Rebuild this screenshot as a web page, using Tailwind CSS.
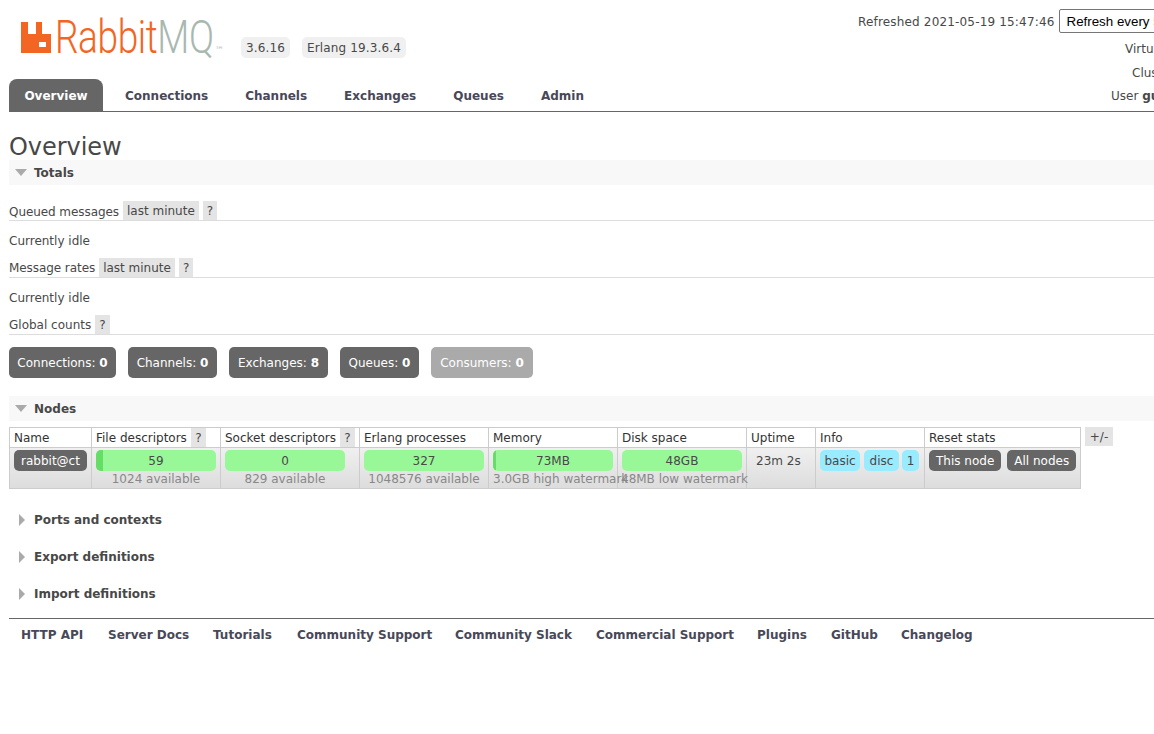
<!doctype html>
<html><head><meta charset="utf-8"><script src="https://cdn.jsdelivr.net/npm/@tailwindcss/browser@4"></script></head>
<body class="w-[1154px] h-[734px] overflow-hidden bg-white text-[#484848] text-[12px] leading-[15px] font-['DejaVu_Sans','Verdana',sans-serif]">
<header class="ml-[9px] w-[1300px] h-[112px] flex border-b border-[#666]">
  <div class="w-[849px] flex flex-col">
    <div class="h-[79px] flex items-start">
      <svg class="mt-[22px] ml-[12px] shrink-0" width="30" height="31" viewBox="0 0 30 31"><path fill="#f26522" fill-rule="evenodd" d="M0 0h7v12h8V0h6v12h9v19H0z M18 20v5h7v-5z"/></svg>
      <span class="mt-[12px] ml-[4px] w-[158px] shrink-0 origin-left scale-x-[0.805] text-[46px] leading-[50px] font-['Roboto',sans-serif] font-light tracking-[-0.5px] whitespace-nowrap"><span class="text-[#f26522]">Rabbit</span><span class="text-[#a8b8b0]">MQ</span></span>
      <span class="mt-[45px] w-[0px] ml-[2px] text-[9px] leading-[10px] text-[#b4bdb8]">™</span>
      <span class="mt-[37px] ml-[26px] bg-[#f0f0f0] rounded-[5px] px-[5px] pt-[4px] pb-[2px] whitespace-nowrap tracking-[0.14px]">3.6.16</span>
      <span class="mt-[37px] ml-[12px] bg-[#f0f0f0] rounded-[5px] px-[5px] pt-[4px] pb-[2px] whitespace-nowrap tracking-[0.14px]">Erlang 19.3.6.4</span>
    </div>
    <nav class="flex gap-[7px] font-bold text-[#484858] h-[32px] items-center">
      <a class="w-[94px] h-[32px] pt-[2px] flex items-center justify-center bg-[#666] text-white rounded-t-[8px]">Overview</a>
      <a class="px-[15px] pt-[2px]">Connections</a>
      <a class="px-[15px] pt-[2px]">Channels</a>
      <a class="px-[15px] pt-[2px]">Exchanges</a>
      <a class="px-[15px] pt-[2px]">Queues</a>
      <a class="px-[15px] pt-[2px]">Admin</a>
    </nav>
  </div>
  <div class="flex flex-col">
    <div class="flex items-center gap-[4px] h-[24px] mt-[9px] whitespace-nowrap">
      <span class="pt-[2px] tracking-[0.17px]">Refreshed 2021-05-19 15:47:46</span>
      <span class="border border-[#767676] rounded-[2px] h-[24px] px-[7px] flex items-center text-[13.33px] text-black font-['Liberation_Sans',sans-serif] w-[130px]">Refresh every 5 seconds</span>
    </div>
    <div class="mt-[9px] pl-[267px] whitespace-nowrap">Virtual host</div>
    <div class="mt-[9px] pl-[274px] whitespace-nowrap">Cluster rabbit@ct</div>
    <div class="mt-[8px] pl-[253px] whitespace-nowrap">User <b>guest</b></div>
  </div>
</header>
<main class="ml-[9px] w-[1200px]">
  <h1 class="text-[24px] leading-[28px] mt-[21px] h-[27px] tracking-[-0.05px]">Overview</h1>
  <h2 class="h-[25px] bg-[#f8f8f8] flex items-center font-bold text-[12px]">
    <svg class="ml-[6px] mr-[7px]" width="12" height="7" viewBox="0 0 12 7"><path d="M0 0h12L6 7z" fill="#aaa"/></svg><span class="pt-[2px]">Totals</span></h2>
  <div class="mt-[16px] h-[20px] border-b border-[#ddd] flex items-start">
    <span class="mt-[4px] tracking-[-0.07px]">Queued messages</span><span class="ml-[4px] bg-[#e4e4e4] px-[4px] h-[19px] leading-[21px]">last minute</span><span class="ml-[4px] bg-[#e4e4e4] px-[4px] h-[19px] leading-[21px]">?</span>
  </div>
  <p class="mt-[13px] h-[24px]">Currently idle</p>
  <div class="h-[20px] border-b border-[#ddd] flex items-start">
    <span class="mt-[3px] tracking-[-0.07px]">Message rates</span><span class="ml-[4px] bg-[#e4e4e4] px-[4px] h-[19px] leading-[21px]">last minute</span><span class="ml-[4px] bg-[#e4e4e4] px-[4px] h-[19px] leading-[21px]">?</span>
  </div>
  <p class="mt-[13px] h-[24px]">Currently idle</p>
  <div class="h-[20px] border-b border-[#ddd] flex items-start">
    <span class="mt-[3px]">Global counts</span><span class="ml-[4px] bg-[#e4e4e4] px-[4px] h-[19px] leading-[21px]">?</span>
  </div>
  <div class="mt-[12px] flex gap-[12px] text-white">
    <span class="h-[31px] w-[107px] pt-[2px] justify-center bg-[#666] rounded-[5px] flex items-center whitespace-pre">Connections: <b>0</b></span>
    <span class="h-[31px] w-[89px] pt-[2px] justify-center bg-[#666] rounded-[5px] flex items-center whitespace-pre">Channels: <b>0</b></span>
    <span class="h-[31px] w-[99px] pt-[2px] justify-center bg-[#666] rounded-[5px] flex items-center whitespace-pre">Exchanges: <b>8</b></span>
    <span class="h-[31px] w-[79px] pt-[2px] justify-center bg-[#666] rounded-[5px] flex items-center whitespace-pre">Queues: <b>0</b></span>
    <span class="h-[31px] w-[102px] pt-[2px] justify-center bg-[#aaa] rounded-[5px] flex items-center whitespace-pre">Consumers: <b>0</b></span>
  </div>
  <h2 class="mt-[18px] h-[25px] bg-[#f8f8f8] flex items-center font-bold text-[12px]">
    <svg class="ml-[6px] mr-[7px]" width="12" height="7" viewBox="0 0 12 7"><path d="M0 0h12L6 7z" fill="#aaa"/></svg><span class="pt-[2px]">Nodes</span></h2>
  <div class="mt-[6px] flex items-start">
    <table class="border-collapse table-fixed w-[1071px] border border-[#ccc]">
      <colgroup><col class="w-[82px]"><col class="w-[129px]"><col class="w-[139px]"><col class="w-[129px]"><col class="w-[129px]"><col class="w-[129px]"><col class="w-[69px]"><col class="w-[109px]"><col class="w-[156px]"></colgroup>
      <thead><tr class="h-[20px] text-left">
        <th class="font-normal border border-[#ccc] p-0 pl-[4px] pt-[2px] text-[#333]">Name</th>
        <th class="font-normal border border-[#ccc] p-0 pl-[4px] text-[#333]"><div class="flex items-center"><span class="pt-[2px]">File descriptors</span><span class="ml-[4px] bg-[#e4e4e4] text-[#484848] w-[15px] h-[19px] leading-[21px] text-center">?</span></div></th>
        <th class="font-normal border border-[#ccc] p-0 pl-[4px] text-[#333]"><div class="flex items-center"><span class="pt-[2px]">Socket descriptors</span><span class="ml-[4px] bg-[#e4e4e4] text-[#484848] w-[15px] h-[19px] leading-[21px] text-center">?</span></div></th>
        <th class="font-normal border border-[#ccc] p-0 pl-[4px] pt-[2px] text-[#333]">Erlang processes</th>
        <th class="font-normal border border-[#ccc] p-0 pl-[4px] pt-[2px] text-[#333]">Memory</th>
        <th class="font-normal border border-[#ccc] p-0 pl-[4px] pt-[2px] text-[#333]">Disk space</th>
        <th class="font-normal border border-[#ccc] p-0 pl-[4px] pt-[2px] text-[#333]">Uptime</th>
        <th class="font-normal border border-[#ccc] p-0 pl-[4px] pt-[2px] text-[#333]">Info</th>
        <th class="font-normal border border-[#ccc] p-0 pl-[4px] pt-[2px] text-[#333]">Reset stats</th>
      </tr></thead>
      <tbody><tr class="h-[41px] bg-linear-to-b from-[#f0f0f0] to-[#dcdcdc] align-top">
        <td class="border border-[#ccc] p-0 px-[4px] pt-[2px]"><span class="block h-[21px] leading-[23px] w-[73px] bg-[#666] text-white text-center rounded-[5px]">rabbit@ct</span></td>
        <td class="border border-[#ccc] p-0 px-[4px] pt-[2px] text-center"><div class="relative w-[120px] h-[21px] leading-[23px] bg-[#98f898] rounded-[5px] overflow-hidden"><div class="absolute left-0 top-0 h-full w-[7px] bg-[#66dd66]"></div><span class="relative">59</span></div><div class="text-[#888] w-[120px] mt-[1px] whitespace-nowrap">1024 available</div></td>
        <td class="border border-[#ccc] p-0 px-[4px] pt-[2px] text-center"><div class="w-[120px] h-[21px] leading-[23px] bg-[#98f898] rounded-[5px]">0</div><div class="text-[#888] w-[120px] mt-[1px] whitespace-nowrap">829 available</div></td>
        <td class="border border-[#ccc] p-0 px-[4px] pt-[2px] text-center"><div class="w-[120px] h-[21px] leading-[23px] bg-[#98f898] rounded-[5px]">327</div><div class="text-[#888] w-[120px] mt-[1px] whitespace-nowrap">1048576 available</div></td>
        <td class="border border-[#ccc] p-0 px-[4px] pt-[2px] text-center"><div class="relative w-[120px] h-[21px] leading-[23px] bg-[#98f898] rounded-[5px] overflow-hidden"><div class="absolute left-0 top-0 h-full w-[3px] bg-[#66dd66]"></div><span class="relative">73MB</span></div><div class="text-[#888] text-left mt-[1px] whitespace-nowrap">3.0GB high watermark</div></td>
        <td class="border border-[#ccc] p-0 px-[4px] pt-[2px] text-center"><div class="w-[120px] h-[21px] leading-[23px] bg-[#98f898] rounded-[5px]">48GB</div><div class="text-[#888] text-left mt-[1px] -ml-[1px] whitespace-nowrap">48MB low watermark</div></td>
        <td class="border border-[#ccc] p-0 pl-[9px] pt-[2px]"><div class="h-[21px] leading-[23px] whitespace-nowrap">23m 2s</div></td>
        <td class="border border-[#ccc] p-0 px-[4px] pt-[2px]"><div class="flex text-center"><span class="w-[40px] h-[21px] leading-[23px] bg-[#99ebff] rounded-[5px]">basic</span><span class="ml-[4px] w-[35px] h-[21px] leading-[23px] bg-[#99ebff] rounded-[5px]">disc</span><span class="ml-[3px] w-[17px] h-[21px] leading-[23px] bg-[#99ebff] rounded-[5px]">1</span></div></td>
        <td class="border border-[#ccc] p-0 px-[4px] pt-[2px]"><div class="flex gap-[6px] text-white"><span class="h-[21px] leading-[23px] px-[7px] bg-[#666] rounded-[5px] whitespace-nowrap">This node</span><span class="h-[21px] leading-[23px] px-[7px] bg-[#666] rounded-[5px] whitespace-nowrap">All nodes</span></div></td>
      </tr></tbody>
    </table>
    <span class="ml-[4px] bg-[#e4e4e4] w-[28px] h-[19px] leading-[21px] text-center">+/-</span>
  </div>
  <h2 class="mt-[23px] h-[15px] flex items-center font-bold text-[12px]"><svg class="ml-[10px] mr-[9px]" width="6" height="12" viewBox="0 0 6 12"><path d="M0 0l6 6-6 6z" fill="#aaa"/></svg><span class="pt-[2px]">Ports and contexts</span></h2>
  <h2 class="mt-[22px] h-[15px] flex items-center font-bold text-[12px]"><svg class="ml-[10px] mr-[9px]" width="6" height="12" viewBox="0 0 6 12"><path d="M0 0l6 6-6 6z" fill="#aaa"/></svg><span class="pt-[2px]">Export definitions</span></h2>
  <h2 class="mt-[22px] h-[15px] flex items-center font-bold text-[12px]"><svg class="ml-[10px] mr-[9px]" width="6" height="12" viewBox="0 0 6 12"><path d="M0 0l6 6-6 6z" fill="#aaa"/></svg><span class="pt-[2px]">Import definitions</span></h2>
  <footer class="mt-[17px] border-t border-[#666] pt-[9px] pl-[12px] flex font-bold text-[#484858] h-[30px] whitespace-nowrap">
    <a class="w-[87px]">HTTP API</a><a class="w-[105px]">Server Docs</a><a class="w-[84px]">Tutorials</a><a class="w-[158px]">Community Support</a><a class="w-[141px]">Community Slack</a><a class="w-[161px]">Commercial Support</a><a class="w-[74px]">Plugins</a><a class="w-[70px]">GitHub</a><a>Changelog</a>
  </footer>
</main>
</body></html>
